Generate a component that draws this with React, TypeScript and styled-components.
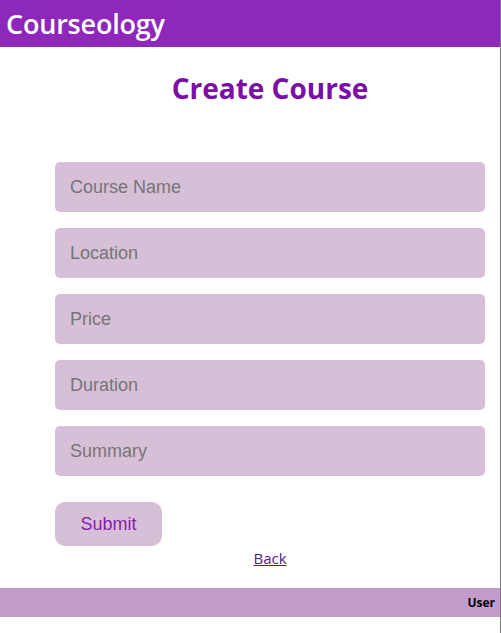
import React from "react";
import styled, { createGlobalStyle } from "styled-components";

const GlobalStyle = createGlobalStyle`
  html, body {
    margin: 0;
    padding: 0;
    background: #ffffff;
  }

  #root {
    width: 500px;
    min-height: 633px;
    border-right: 1px solid #7a7a7a;
    font-family: "Open Sans", "Noto Sans", sans-serif;
  }
`;

const Header = styled.header`
  height: 47px;
  background-color: #8e28bc;
  display: flex;
  align-items: center;
  padding-left: 6px;
`;

const Brand = styled.h2`
  margin: 0;
  color: #ffffff;
  font-size: 27px;
  font-weight: 600;
  letter-spacing: -0.2px;
`;

const Main = styled.main`
  margin: 0 15px 0 55px;
  padding-bottom: 19px;
`;

const Title = styled.h1`
  margin: 0;
  padding: 23px 0 56px;
  text-align: center;
  color: #7a0ea6;
  font-size: 28px;
  font-weight: 700;
  line-height: 36px;
`;

const Form = styled.form`
  display: flex;
  flex-direction: column;
  gap: 16px;
`;

const Field = styled.input`
  box-sizing: border-box;
  width: 100%;
  height: 50px;
  padding: 0 15px;
  border: none;
  border-radius: 5px;
  background-color: #d8bfd8;
  font-family: "Liberation Sans", Arial, sans-serif;
  font-size: 18px;
  color: #333333;
  outline: none;

  &::placeholder {
    color: #757575;
  }
`;

const SubmitButton = styled.button`
  align-self: flex-start;
  margin-top: 10px;
  width: 107px;
  height: 44px;
  border: none;
  border-radius: 10px;
  background-color: #d8bfd8;
  color: #8a1ab0;
  font-family: "Liberation Sans", Arial, sans-serif;
  font-size: 18px;
  cursor: pointer;
`;

const BackRow = styled.div`
  text-align: center;
  margin-top: 1px;
  line-height: 22px;
`;

const BackLink = styled.a`
  color: #551a8b;
  font-size: 15px;
  text-decoration: underline;
`;

const Footer = styled.footer`
  height: 29px;
  background-color: #c39bc9;
  display: flex;
  align-items: center;
  justify-content: flex-end;
  padding-right: 5px;
`;

const FooterUser = styled.span`
  font-size: 12px;
  font-weight: 700;
  color: #000000;
`;

const fields = ["Course Name", "Location", "Price", "Duration", "Summary"];

const App: React.FC = () => {
  return (
    <>
      <GlobalStyle />
      <Header>
        <Brand>Courseology</Brand>
      </Header>
      <Main>
        <Title>Create Course</Title>
        <Form onSubmit={(e) => e.preventDefault()}>
          {fields.map((name) => (
            <Field key={name} type="text" placeholder={name} />
          ))}
          <SubmitButton type="submit">Submit</SubmitButton>
        </Form>
        <BackRow>
          <BackLink href="#">Back</BackLink>
        </BackRow>
      </Main>
      <Footer>
        <FooterUser>User</FooterUser>
      </Footer>
    </>
  );
};

export default App;
